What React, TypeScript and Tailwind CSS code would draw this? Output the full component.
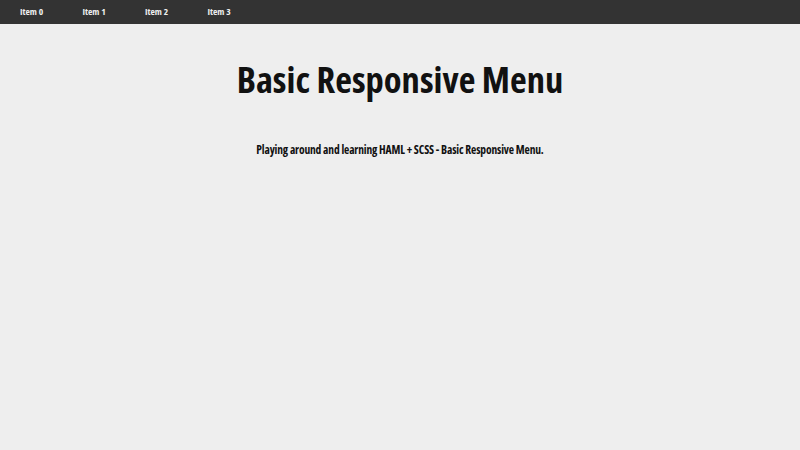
import React from "react";

const items = ["Item 0", "Item 1", "Item 2", "Item 3"];

export default function App() {
  return (
    <div className="min-h-[450px] w-full bg-[#eeeeee] font-['Open_Sans',sans-serif] font-stretch-condensed text-[#111]">
      {/* top menu bar */}
      <nav className="h-[24px] w-full bg-[#333333]">
        <ul className="flex h-full items-center pl-[20px]">
          {items.map((item) => (
            <li key={item} className="w-[62.5px] text-[9.5px] font-bold leading-none text-[#eeeeee]">
              {item}
            </li>
          ))}
        </ul>
      </nav>

      <header className="flex flex-col items-center">
        <h1 className="mt-[37px] text-[36.5px] font-bold leading-none">
          Basic Responsive Menu
        </h1>
        <p className="mt-[46px] text-[11.5px] font-bold leading-none tracking-[-0.15px]">
          Playing around and learning HAML + SCSS - Basic Responsive Menu.
        </p>
      </header>
    </div>
  );
}
